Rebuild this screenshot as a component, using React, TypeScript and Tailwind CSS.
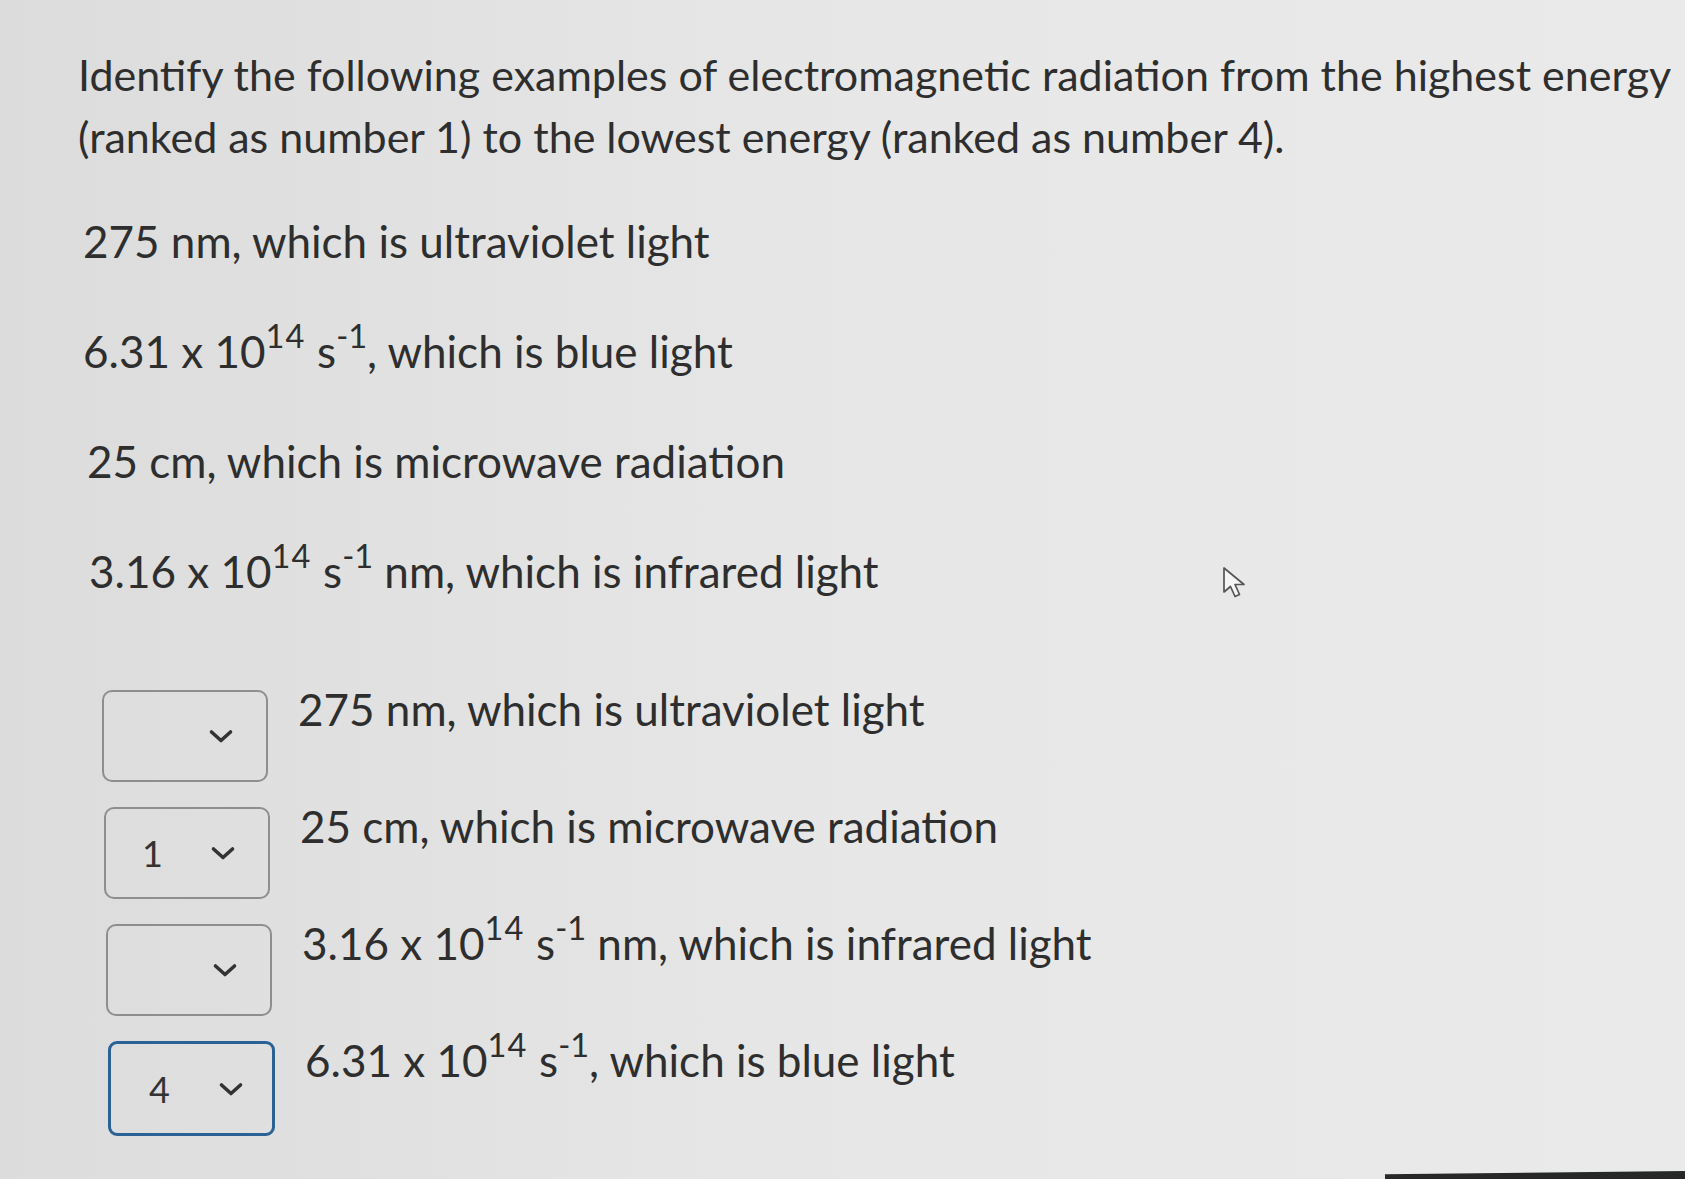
import React from 'react';

const font = { fontFamily: 'Lato, "Open Sans", sans-serif' };

interface Item {
  value: string;
  focused?: boolean;
  shift: string;
  label: React.ReactNode;
}

const Sci = ({ a, tail }: { a: string; tail: string }) => (
  <>
    {a} x 10<sup className="text-[0.74em] -top-[0.62em] tracking-[0.04em]">14</sup> s
    <sup className="text-[0.74em] -top-[0.62em]">-1</sup>
    {tail}
  </>
);

const Chevron = () => (
  <svg width="26" height="16" viewBox="0 0 26 16" fill="none">
    <path d="M3.5 4l9.5 8.5 9.5-8.5" stroke="#333" strokeWidth="3.6" strokeLinecap="round" strokeLinejoin="round" />
  </svg>
);

const Select = ({ value, focused }: { value: string; focused?: boolean }) => (
  <div
    className={
      focused
        ? 'w-[167px] h-[95px] shrink-0 rounded-[9px] border-[3px] border-[#2a6296] flex items-center pl-[38px] pr-[28px] justify-between'
        : 'w-[166px] h-[92px] shrink-0 rounded-[10px] border-2 border-[#8d8f8e] flex items-center pl-[36px] pr-[32px] justify-between'
    }
  >
    <span className="text-[36px] text-[#333]">{value}</span>
    <Chevron />
  </div>
);

export default function App() {
  const items: Item[] = [
    { value: '', shift: 'ml-0', label: '275 nm, which is ultraviolet light' },
    { value: '1', shift: 'ml-[2px]', label: '25 cm, which is microwave radiation' },
    { value: '', shift: 'ml-[4px]', label: <Sci a="3.16" tail=" nm, which is infrared light" /> },
    { value: '4', focused: true, shift: 'ml-[6px]', label: <Sci a="6.31" tail=", which is blue light" /> },
  ];

  return (
    <div
      className="relative w-[1685px] h-[1179px] overflow-hidden bg-gradient-to-r from-[#dbdcdb] via-[#e6e7e6] to-[#e9eae9] text-[#2e2e2e]"
      style={font}
    >
      <div className="pl-[78px] pt-[44px] text-[43px] leading-[62px]">
        <p className="whitespace-nowrap">
          Identify the following examples of electromagnetic radiation from the highest energy
          <br />
          (ranked as number 1) to the lowest energy (ranked as number 4).
        </p>

        <div className="mt-[42px] flex flex-col gap-[48px] pl-[5px] text-[44px]">
          <p>275 nm, which is ultraviolet light</p>
          <p>
            <Sci a="6.31" tail=", which is blue light" />
          </p>
          <p className="pl-[4px]">25 cm, which is microwave radiation</p>
          <p className="pl-[6px]">
            <Sci a="3.16" tail=" nm, which is infrared light" />
          </p>
        </div>

        <div className="mt-[88px] flex flex-col gap-[25px] pl-[24px] text-[44px]">
          {items.map((it, i) => (
            <div key={i} className={`flex items-start gap-[30px] ${it.shift}`}>
              <Select value={it.value} focused={it.focused} />
              <p className="-mt-[12px]">{it.label}</p>
            </div>
          ))}
        </div>
      </div>

      {/* mouse pointer */}
      <svg className="absolute left-[1222px] top-[566px]" width="28" height="34" viewBox="0 0 28 34" fill="none">
        <path d="M2 2v24l6.5-5.5 4.5 10 4.5-2-4.5-10h9z" fill="#f4f5f4" stroke="#555" strokeWidth="1.7" strokeLinejoin="round" />
      </svg>

      {/* screen bezel edge at the bottom right of the photo */}
      <div className="absolute right-0 bottom-0 w-[300px] h-[10px] bg-[#262828] origin-right -rotate-[0.6deg] translate-y-[2px]" />
    </div>
  );
}
